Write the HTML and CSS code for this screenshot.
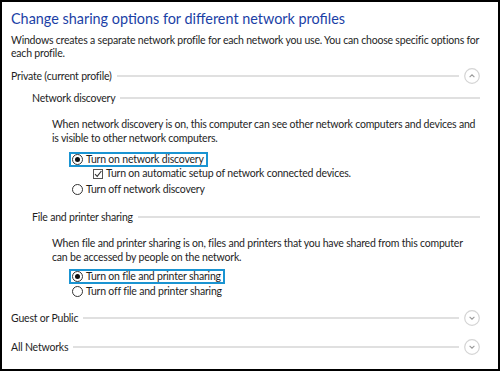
FILE: index.html
```html
<!DOCTYPE html>
<html>
<head>
<meta charset="utf-8">
<link rel="stylesheet" href="styles.css">
</head>
<body>
<div class="frame">
  <h1 class="title">Change sharing options for different network profiles</h1>
  <p class="intro">Windows creates a separate network profile for each network you use. You can choose specific options for each profile.</p>

  <div class="group">
    <span class="group-label">Private (current profile)</span>
    <span class="rule"></span>
    <span class="toggle"><svg viewBox="0 0 16 16" width="16" height="16"><circle cx="8" cy="8" r="7.3" fill="none" stroke="#d4d4d4" stroke-width="1.2"/><path d="M5.6 9.2 L8 6.8 L10.4 9.2" fill="none" stroke="#9a9a9a" stroke-width="1.1"/></svg></span>
  </div>

  <div class="sub">
    <span class="sub-label">Network discovery</span>
    <span class="rule"></span>
  </div>
  <p class="para">When network discovery is on, this computer can see other network computers and devices and is visible to other network computers.</p>
  <div class="options">
    <div class="opt selected"><span class="radio on"></span>Turn on network discovery</div>
    <div class="opt check-row"><span class="check"><svg viewBox="0 0 10 10" width="10" height="10"><path d="M2 5.2 L4.2 7.4 L8.4 2" fill="none" stroke="#333" stroke-width="1.1"/></svg></span>Turn on automatic setup of network connected devices.</div>
    <div class="opt after-check"><span class="radio"></span>Turn off network discovery</div>
  </div>

  <div class="sub sub2">
    <span class="sub-label">File and printer sharing</span>
    <span class="rule"></span>
  </div>
  <p class="para para2">When file and printer sharing is on, files and printers that you have shared from this computer can be accessed by people on the network.</p>
  <div class="options opts2">
    <div class="opt selected"><span class="radio on"></span>Turn on file and printer sharing</div>
    <div class="opt"><span class="radio"></span>Turn off file and printer sharing</div>
  </div>

  <div class="group g2">
    <span class="group-label">Guest or Public</span>
    <span class="rule"></span>
    <span class="toggle"><svg viewBox="0 0 16 16" width="16" height="16"><circle cx="8" cy="8" r="7.3" fill="none" stroke="#d4d4d4" stroke-width="1.2"/><path d="M5.6 6.8 L8 9.2 L10.4 6.8" fill="none" stroke="#9a9a9a" stroke-width="1.1"/></svg></span>
  </div>
  <div class="group g3">
    <span class="group-label">All Networks</span>
    <span class="rule"></span>
    <span class="toggle"><svg viewBox="0 0 16 16" width="16" height="16"><circle cx="8" cy="8" r="7.3" fill="none" stroke="#d4d4d4" stroke-width="1.2"/><path d="M5.6 6.8 L8 9.2 L10.4 6.8" fill="none" stroke="#9a9a9a" stroke-width="1.1"/></svg></span>
  </div>
</div>
</body>
</html>
```

FILE: styles.css
```css
html, body { margin: 0; padding: 0; background: #fff; }
.frame {
  width: 500px; height: 371px; box-sizing: border-box;
  border: 2px solid #000;
  padding: 7px 18px 0 9px;
  font-family: Lato, "Noto Sans", sans-serif;
  font-size: 10.5px; letter-spacing: -0.2px; color: #1e1e1e;
  overflow: hidden;
}
.title {
  margin: 0; font-weight: 400; font-size: 14.4px; letter-spacing: 0; line-height: 19px;
  color: #1b3fa6;
}
.intro { margin: 6px 0 0; line-height: 13px; }
.group { display: flex; align-items: center; margin-top: 8px; height: 16px; }
.group-label { white-space: nowrap; }
.rule { flex: 1; height: 2px; background: #e0e0e0; margin-left: 5px; }
.toggle { display: flex; margin-left: 5px; }
.sub { display: flex; align-items: center; margin-left: 21px; margin-top: 7px; height: 14px; }
.sub2 { margin-top: 13px; }
.para { margin: 12px 0 0 41px; line-height: 14px; }
.para2 { margin-top: 12px; }
.options { margin: 7px 0 0 58px; display: flex; flex-direction: column; }
.opts2 { margin-top: 5px; }
.opt { display: flex; align-items: center; height: 11px; line-height: 11px; white-space: nowrap; border: 2px solid transparent; align-self: flex-start; padding-right: 2px; }
.opt.selected { border-color: #1a94d2; }
.check-row { margin-left: 22px; margin-top: -1px; }
.after-check { margin-top: 1px; }
.radio { width: 9px; height: 9px; border: 1px solid #333; border-radius: 50%; margin: 0 3px 0 1px; position: relative; box-sizing: content-box; }
.radio.on::after { content: ""; position: absolute; left: 2px; top: 2px; width: 5px; height: 5px; border-radius: 50%; background: #111; }
.check { width: 10px; height: 10px; border: 1px solid #555; box-sizing: border-box; margin-right: 3px; display: flex; }
.check svg { margin: -1px; }
.g2 { margin-top: 11px; }
.g3 { margin-top: 13px; }
```
